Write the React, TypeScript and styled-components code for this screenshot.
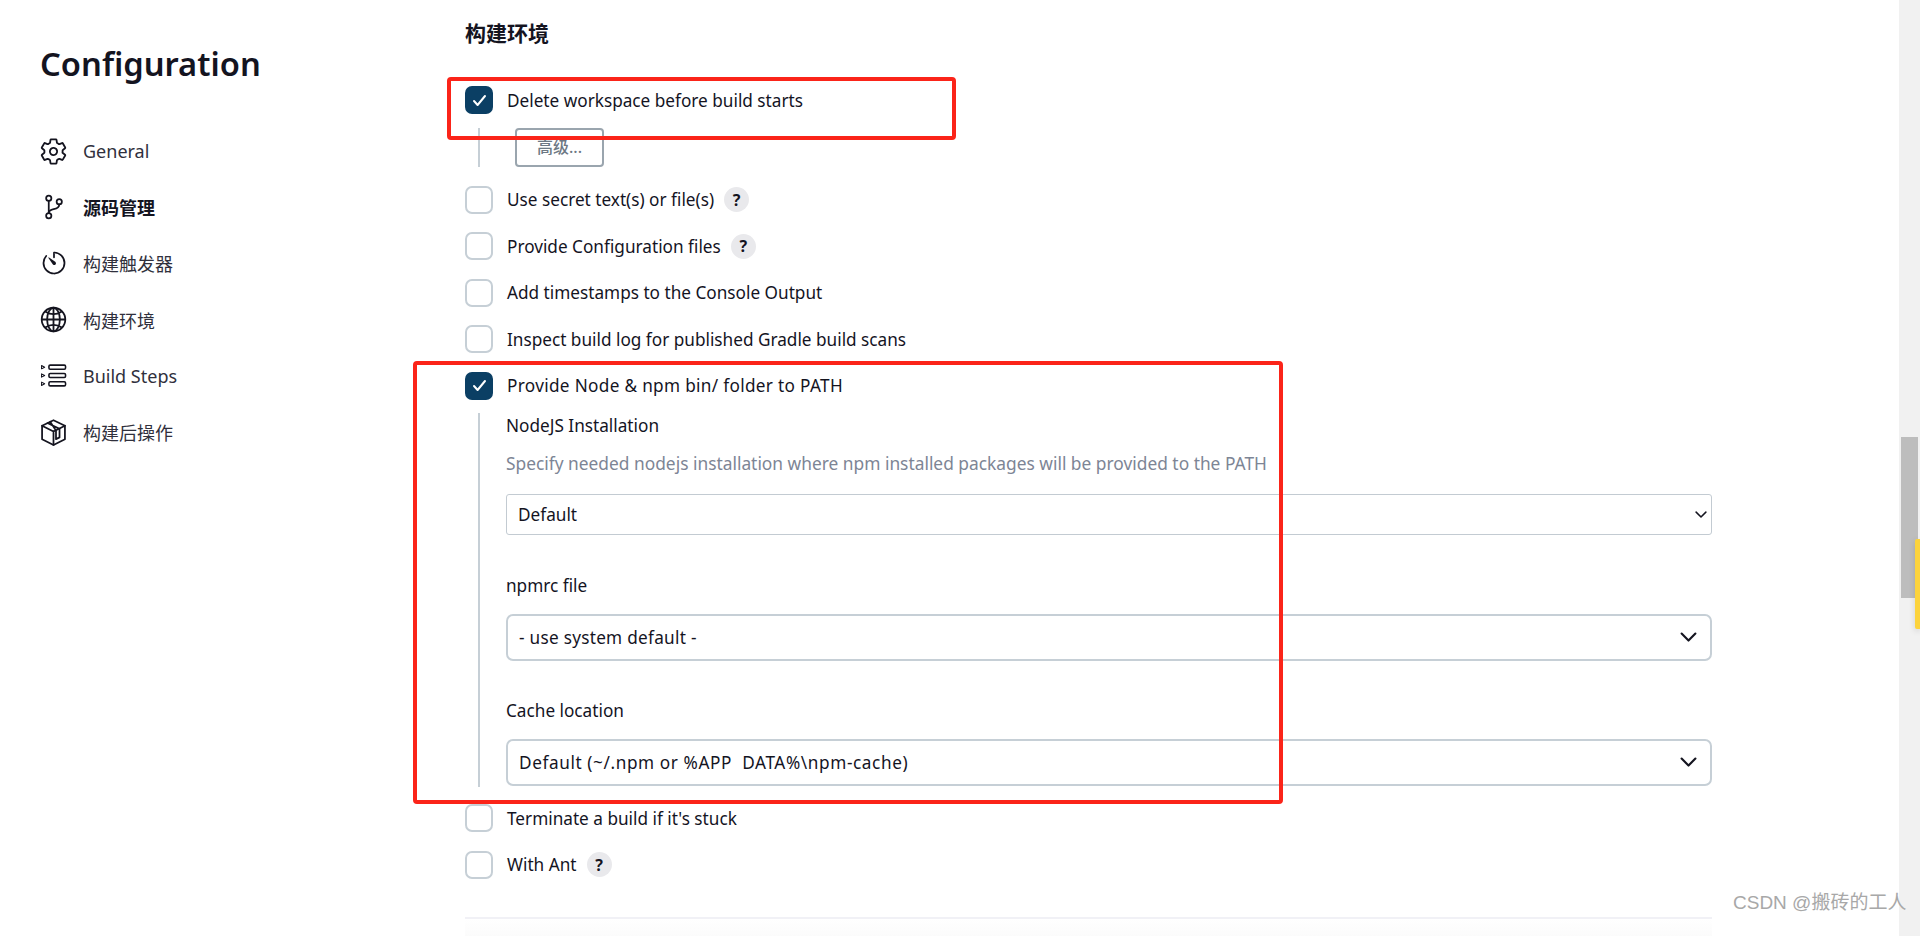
import React from "react";
import styled, { createGlobalStyle } from "styled-components";
import { IoSettingsOutline, IoGitBranchOutline, IoTimerOutline, IoGlobeOutline } from "react-icons/io5";

const FONT = `"Noto Sans", "Noto Sans CJK SC", sans-serif`;

const Global = createGlobalStyle`
  html, body { margin: 0; padding: 0; background: #fff; }
  body { font-family: ${FONT}; color: #14141f; overflow: hidden; }
  * { box-sizing: border-box; }
`;

const Page = styled.div`
  position: relative;
  display: flex;
  height: 936px;
  width: 1920px;
  overflow: hidden;
`;

const Sidebar = styled.nav`
  width: 465px;
  flex: none;
  padding: 41px 0 0 40px;
`;

const PageTitle = styled.h1`
  margin: 0 0 36px;
  height: 46px;
  line-height: 46px;
  font-size: 32.7px;
  font-weight: 600;
`;

const NavRow = styled.div`
  display: flex;
  align-items: center;
  height: 56.2px;
  font-size: 18px;
  font-weight: ${(p) => (p.$active ? 700 : 400)};
  color: ${(p) => (p.$active ? "#14141f" : "#30303c")};
`;

const NavIcon = styled.span`
  display: flex;
  align-items: center;
  justify-content: center;
  width: 27px;
  height: 28px;
  margin-right: 16px;
  flex: none;
  color: #14141f;
  svg { flex: none; }
`;

const Main = styled.main`
  width: 1247px;
  flex: none;
  padding-top: 18px;
`;

const SectionTitle = styled.h2`
  margin: 0 0 29px;
  height: 30px;
  line-height: 30px;
  font-size: 21px;
  font-weight: 700;
`;

const CheckRow = styled.div`
  display: flex;
  align-items: center;
  height: 46.5px;
  font-size: 17.2px;
  letter-spacing: ${(p) => p.$tracking || 0}px;
`;

const Box = styled.span`
  display: flex;
  align-items: center;
  justify-content: center;
  width: 28px;
  height: 28px;
  flex: none;
  margin-right: 14px;
  border-radius: 7px;
  border: 2.5px solid ${(p) => (p.$checked ? "#0b3f64" : "#c6cfd6")};
  background: ${(p) => (p.$checked ? "#0b3f64" : "#fff")};
`;

const Help = styled.span`
  display: flex;
  align-items: center;
  justify-content: center;
  width: 25px;
  height: 25px;
  margin-left: 10px;
  border-radius: 50%;
  background: #e9e9ec;
  font-size: 16px;
  font-weight: 700;
`;

const Nested = styled.div`
  margin-left: 13px;
  padding-left: 26px;
  border-left: 2px solid #c6cfd6;
`;

const AdvancedWrap = styled(Nested)`
  height: 39px;
  padding-left: 35px;
  margin-top: 4px;
  margin-bottom: 10px;
`;

const AdvancedBtn = styled.button`
  display: block;
  width: 89px;
  height: 39px;
  padding: 0 0 3px;
  border: 2px solid #9aa5ae;
  border-radius: 4px;
  background: #fff;
  color: #6d7884;
  font-family: ${FONT};
  font-size: 16px;
  font-weight: 500;
`;

const NodeBlock = styled(Nested)`
  margin-top: 4px;
  margin-bottom: 8px;
  height: 374px;
`;

const FieldLabel = styled.div`
  font-size: 17.2px;
  line-height: 26px;
  margin-top: ${(p) => p.$top}px;
`;

const Hint = styled.div`
  font-size: 17.35px;
  line-height: 26px;
  margin-top: 11px;
  color: #7d8595;
`;

const SelectBox = styled.div`
  display: flex;
  align-items: center;
  justify-content: space-between;
  width: 1206px;
  height: ${(p) => (p.$native ? 41 : 47)}px;
  margin-top: ${(p) => p.$top}px;
  padding: 0 ${(p) => (p.$native ? 4 : 13)}px 0 11px;
  border: ${(p) => (p.$native ? "1px solid #c3cbd2" : "2px solid #c6cfd6")};
  border-radius: ${(p) => (p.$native ? 3 : 7)}px;
  font-size: 17.2px;
  letter-spacing: ${(p) => p.$tracking || 0}px;
  svg { width: ${(p) => (p.$native ? 12 : 17)}px; flex: none; }
`;

const Rule = styled.div`
  height: 2px;
  margin-top: 29px;
  background: #f1f1f6;
`;

const FootShade = styled.div`
  height: 18px;
  background: linear-gradient(#ffffff, #fbfbfb);
`;

const ScrollTrack = styled.div`
  margin-left: auto;
  width: 21px;
  flex: none;
  padding: 437px 2px 0;
  background: #f1f1f1;
`;

const ScrollThumb = styled.div`
  height: 161px;
  background: #bdbdbd;
`;

const YellowTab = styled.div`
  position: absolute;
  left: 1915px;
  top: 539px;
  width: 5px;
  height: 90px;
  border-radius: 2px 0 0 2px;
  background: #fcd33c;
  box-shadow: 0 2px 6px rgba(0, 0, 0, 0.15);
`;

const Callout = styled.div`
  position: absolute;
  left: ${(p) => p.$x}px;
  top: ${(p) => p.$y}px;
  width: ${(p) => p.$w}px;
  height: ${(p) => p.$h}px;
  border: 4px solid #fb2419;
  border-radius: 4px;
  pointer-events: none;
`;

const Watermark = styled.div`
  position: absolute;
  left: 1733px;
  top: 890px;
  font-family: "Liberation Sans", "Noto Sans CJK SC", sans-serif;
  font-size: 19px;
  line-height: 26px;
  color: #a8a8a8;
  white-space: nowrap;
`;

const Check = () => (
  <svg width="15" height="13" viewBox="0 0 15 13" fill="none">
    <path d="M2 7l3.6 4L13 2" stroke="#fff" strokeWidth="2" strokeLinecap="round" strokeLinejoin="round" />
  </svg>
);

const Chevron = () => (
  <svg viewBox="0 0 16 10" fill="none">
    <path d="M1.5 1.5L8 8l6.5-6.5" stroke="#14141f" strokeWidth="2" strokeLinecap="round" strokeLinejoin="round" />
  </svg>
);

const StepsIcon = () => (
  <svg width="27" height="27" viewBox="0 0 26 26" fill="none" stroke="currentColor" strokeWidth="1.5" strokeLinejoin="round">
    <path d="M1.5 3.4v3.2l3 -1.6zM1.5 11.4v3.2l3 -1.6zM1.5 19.4v3.2l3 -1.6z" strokeWidth="1" />
    <rect x="8.6" y="3" width="16" height="4" rx="1.2" />
    <rect x="8.6" y="11" width="16" height="4" rx="1.2" />
    <rect x="8.6" y="19" width="16" height="4" rx="1.2" />
  </svg>
);

const PackageIcon = () => (
  <svg width="27" height="27" viewBox="0 0 26 26" fill="none" stroke="currentColor" strokeWidth="1.7" strokeLinejoin="round" strokeLinecap="round">
    <path d="M13 1.2l11 5.3v13L13 25 2 19.5v-13z" />
    <path d="M2 6.5L13 12l11-5.5M13 12v13" />
    <path d="M7.2 3.9L18.8 9.5v8.2l-3.4 1.7v-8.2L9.8 2.6" />
  </svg>
);

const Row: React.FC<{ checked?: boolean; help?: boolean; label: string; tracking?: number }> = ({ checked, help, label, tracking }) => (
  <CheckRow $tracking={tracking}>
    <Box $checked={checked}>{checked && <Check />}</Box>
    {label}
    {help && <Help>?</Help>}
  </CheckRow>
);

export default function App() {
  return (
    <Page>
      <Global />
      <Sidebar>
        <PageTitle>Configuration</PageTitle>
        <NavRow><NavIcon><IoSettingsOutline size={29} /></NavIcon>General</NavRow>
        <NavRow $active><NavIcon><IoGitBranchOutline size={28} /></NavIcon>源码管理</NavRow>
        <NavRow><NavIcon><IoTimerOutline size={28} /></NavIcon>构建触发器</NavRow>
        <NavRow><NavIcon><IoGlobeOutline size={29} /></NavIcon>构建环境</NavRow>
        <NavRow><NavIcon><StepsIcon /></NavIcon>Build Steps</NavRow>
        <NavRow><NavIcon><PackageIcon /></NavIcon>构建后操作</NavRow>
      </Sidebar>
      <Main>
        <SectionTitle>构建环境</SectionTitle>
        <Row checked label="Delete workspace before build starts" />
        <AdvancedWrap>
          <AdvancedBtn>高级...</AdvancedBtn>
        </AdvancedWrap>
        <Row help label="Use secret text(s) or file(s)" />
        <Row help label="Provide Configuration files" />
        <Row label="Add timestamps to the Console Output" />
        <Row label="Inspect build log for published Gradle build scans" />
        <Row checked tracking={0.32} label="Provide Node & npm bin/ folder to PATH" />
        <NodeBlock>
          <FieldLabel $top={2}>NodeJS Installation</FieldLabel>
          <Hint>Specify needed nodejs installation where npm installed packages will be provided to the PATH</Hint>
          <SelectBox $native $top={18}>Default<Chevron /></SelectBox>
          <FieldLabel $top={38}>npmrc file</FieldLabel>
          <SelectBox $top={15} $tracking={0.27}>- use system default -<Chevron /></SelectBox>
          <FieldLabel $top={37}>Cache location</FieldLabel>
          <SelectBox $top={15} $tracking={0.6}>Default (~/.npm or %APP{"\u00a0\u00a0"}DATA%\npm-cache)<Chevron /></SelectBox>
        </NodeBlock>
        <Row label="Terminate a build if it's stuck" />
        <Row help label="With Ant" />
        <Rule />
        <FootShade />
      </Main>
      <ScrollTrack>
        <ScrollThumb />
      </ScrollTrack>
      <YellowTab />
      <Callout $x={447} $y={77} $w={509} $h={63} />
      <Callout $x={413} $y={361} $w={870} $h={443} />
      <Watermark>CSDN @搬砖的工人</Watermark>
    </Page>
  );
}
